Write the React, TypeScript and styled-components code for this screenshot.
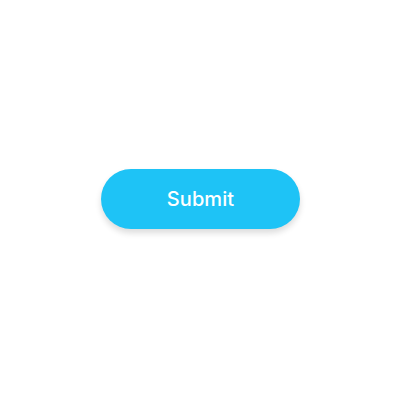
import React from "react";
import styled, { createGlobalStyle } from "styled-components";

const Global = createGlobalStyle`
  html, body { margin: 0; padding: 0; background: #ffffff; }
  * { box-sizing: border-box; }
`;

const Page = styled.main`
  width: 400px;
  height: 400px;
  display: flex;
  align-items: center;
  justify-content: center;
`;

const SubmitButton = styled.button`
  width: 199px;
  height: 60px;
  margin-left: 1px;
  margin-top: -2px;
  border: none;
  border-radius: 30px;
  background: #1ec3f6;
  color: #ffffff;
  font-family: Inter, "Noto Sans", sans-serif;
  font-size: 20px;
  font-weight: 500;
  letter-spacing: 0.1px;
  box-shadow: 0 4px 6px rgba(0, 0, 0, 0.14);
  cursor: pointer;
`;

export default function App() {
  return (
    <>
      <Global />
      <Page>
        <SubmitButton type="button">Submit</SubmitButton>
      </Page>
    </>
  );
}
